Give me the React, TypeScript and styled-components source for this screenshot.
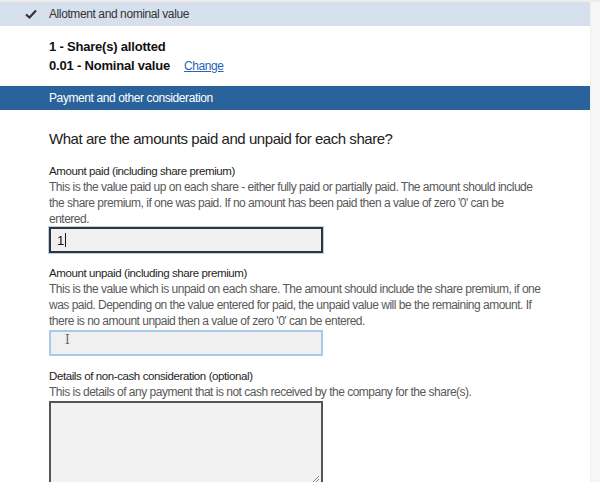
import styled, { createGlobalStyle } from "styled-components";

const GlobalStyle = createGlobalStyle`
    html, body {
        margin: 0;
        padding: 0;
        background: #ffffff;
    }

    body {
        font-family: "Liberation Sans", Arial, sans-serif;
        color: #222;
        letter-spacing: -0.4px;
    }
`;

const Page = styled.div`
    display: flex;
    width: 600px;
    height: 482px;
    overflow: hidden;
    border-top: 2px solid #ececec;
    box-sizing: border-box;
`;

const Main = styled.div`
    flex: 1;
    display: flex;
    flex-direction: column;

    & > * {
        flex-shrink: 0;
    }
`;

const Scrollbar = styled.div`
    width: 9px;
    background: #f6f6f6;
    border-left: 1px solid #efefef;
`;

const StepBar = styled.div<{ $active?: boolean }>`
    display: flex;
    align-items: center;
    height: 24px;
    padding-left: ${p => (p.$active ? "49px" : "25px")};
    background: ${p => (p.$active ? "#2a639b" : "#d5e0ec")};
    color: ${p => (p.$active ? "#ffffff" : "#333333")};
    font-size: 12px;
`;

const Check = styled.svg`
    width: 12px;
    height: 10px;
    margin-right: 12px;
`;

const Summary = styled.div`
    display: flex;
    flex-direction: column;
    gap: 3px;
    padding: 13px 0 12px 49px;
    font-size: 13px;
    line-height: 16px;
    font-weight: bold;
    letter-spacing: -0.2px;
    color: #111;
`;

const SummaryRow = styled.div`
    display: flex;
    align-items: baseline;
`;

const ChangeLink = styled.a`
    margin-left: 14px;
    font-size: 12px;
    font-weight: normal;
    letter-spacing: -0.4px;
    color: #2a63b8;
    text-decoration: underline;
`;

const Form = styled.div`
    display: flex;
    flex-direction: column;
    padding: 20px 0 0 49px;
    width: 496px;
`;

const Heading = styled.h2`
    margin: 0 0 15px;
    font-size: 15px;
    line-height: 18px;
    font-weight: normal;
    letter-spacing: -0.45px;
    color: #222;
`;

const Field = styled.div`
    display: flex;
    flex-direction: column;
    margin-bottom: 12px;
`;

const Label = styled.div`
    font-size: 11.5px;
    line-height: 16px;
    color: #1e1e1e;
`;

const Hint = styled.div<{ $gap?: number }>`
    font-size: 12px;
    line-height: 16px;
    letter-spacing: -0.5px;
    color: #595959;
    margin-bottom: ${p => p.$gap ?? 0}px;
`;

const TextInput = styled.div<{ $focused?: boolean }>`
    display: flex;
    align-items: center;
    box-sizing: border-box;
    width: 274px;
    height: 26px;
    padding-left: 6px;
    background: #f0f0f0;
    border: 2px solid ${p => (p.$focused ? "#333333" : "#a9c9ea")};
    box-shadow: ${p => (p.$focused ? "0 0 0 1px #b5d2f0" : "none")};
    font-size: 13px;
    color: #111;
`;

const Caret = styled.span`
    display: inline-block;
    width: 1px;
    height: 14px;
    margin-left: 1px;
    background: #111;
`;

const IBeam = styled.span`
    margin-left: 8px;
    margin-top: -6px;
    font-family: "DejaVu Serif", serif;
    font-size: 12px;
    color: #666;
`;

const TextArea = styled.div`
    position: relative;
    box-sizing: border-box;
    width: 274px;
    height: 84px;
    background: #f2f2f2;
    border: 2px solid #555;
    border-bottom: none;
`;

const Grip = styled.svg`
    position: absolute;
    right: 1px;
    bottom: 2px;
    width: 8px;
    height: 8px;
`;

export default function App() {
    return (
        <>
            <GlobalStyle />
            <Page>
                <Main>
                    <StepBar>
                        <Check viewBox="0 0 12 10">
                            <path d="M1 5.5 L4.5 8.5 L11 1.5" fill="none" stroke="#333" strokeWidth="2.2" />
                        </Check>
                        Allotment and nominal value
                    </StepBar>
                    <Summary>
                        <SummaryRow>1 - Share(s) allotted</SummaryRow>
                        <SummaryRow>
                            0.01 - Nominal value
                            <ChangeLink href="#">Change</ChangeLink>
                        </SummaryRow>
                    </Summary>
                    <StepBar $active>Payment and other consideration</StepBar>
                    <Form>
                        <Heading>What are the amounts paid and unpaid for each share?</Heading>
                        <Field>
                            <Label>Amount paid (including share premium)</Label>
                            <Hint>
                                This is the value paid up on each share - either fully paid or partially paid. The
                                amount should include the share premium, if one was paid. If no amount has been paid
                                then a value of zero '0' can be entered.
                            </Hint>
                            <TextInput $focused>
                                1<Caret />
                            </TextInput>
                        </Field>
                        <Field>
                            <Label>Amount unpaid (including share premium)</Label>
                            <Hint $gap={1}>
                                This is the value which is unpaid on each share. The amount should include the share
                                premium, if one was paid. Depending on the value entered for paid, the unpaid value will
                                be the remaining amount. If there is no amount unpaid then a value of zero '0' can be
                                entered.
                            </Hint>
                            <TextInput>
                                <IBeam>I</IBeam>
                            </TextInput>
                        </Field>
                        <Field>
                            <Label>Details of non-cash consideration (optional)</Label>
                            <Hint $gap={1}>
                                This is details of any payment that is not cash received by the company for the share(s).
                            </Hint>
                            <TextArea>
                                <Grip viewBox="0 0 8 8">
                                    <path d="M7 1 L1 7 M7 4 L4 7" stroke="#888" strokeWidth="1" />
                                </Grip>
                            </TextArea>
                        </Field>
                    </Form>
                </Main>
                <Scrollbar />
            </Page>
        </>
    );
}
